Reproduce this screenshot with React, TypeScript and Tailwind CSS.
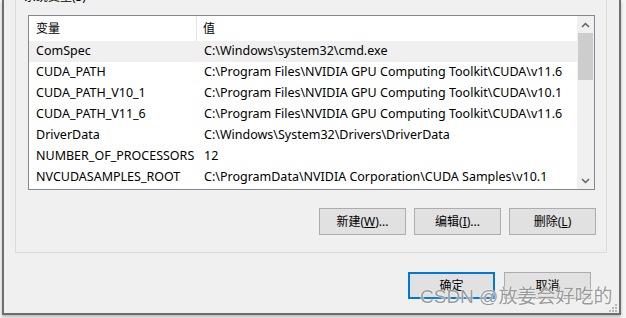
import React from 'react'

const rows: [string, string][] = [
  ['ComSpec', 'C:\\Windows\\system32\\cmd.exe'],
  ['CUDA_PATH', 'C:\\Program Files\\NVIDIA GPU Computing Toolkit\\CUDA\\v11.6'],
  ['CUDA_PATH_V10_1', 'C:\\Program Files\\NVIDIA GPU Computing Toolkit\\CUDA\\v10.1'],
  ['CUDA_PATH_V11_6', 'C:\\Program Files\\NVIDIA GPU Computing Toolkit\\CUDA\\v11.6'],
  ['DriverData', 'C:\\Windows\\System32\\Drivers\\DriverData'],
  ['NUMBER_OF_PROCESSORS', '12'],
  ['NVCUDASAMPLES_ROOT', 'C:\\ProgramData\\NVIDIA Corporation\\CUDA Samples\\v10.1'],
  ['NVTOOLSEXT_PATH', 'C:\\Program Files\\NVIDIA Corporation\\NvToolsExt\\'],
]

const font = { fontFamily: '"Noto Sans", "Noto Sans CJK SC", sans-serif' }

function Btn({ children, focused }: { children: React.ReactNode; focused?: boolean }) {
  return (
    <div
      className={`flex h-[27px] w-[87px] items-center justify-center text-[12px] text-black ${
        focused ? 'border-2 border-[#0078d7] bg-[#e1e1e1]' : 'border border-[#adadad] bg-[#e1e1e1]'
      }`}
    >
      {children}
    </div>
  )
}

export default function App() {
  return (
    <div className="relative h-[318px] w-[626px] overflow-hidden bg-[#f5f5f5]" style={font}>
      <div className="ml-[2px] flex h-[315px] w-[619px] flex-col border-x-2 border-b-2 border-[#6e6e6e] bg-[#f0f0f0] shadow-[0_2px_3px_rgba(0,0,0,0.25)]">
        {/* group box */}
        <div className="relative ml-[11px] flex h-[253px] w-[592px] flex-col border-x border-b border-[#dcdcdc]">
          <span className="absolute left-[8px] top-[-10px] text-[12px] leading-[14px] text-black">系统变量(S)</span>

          {/* list */}
          <div className="ml-[12px] mt-[15px] flex h-[175px] w-[567px] border border-[#828790] bg-white">
            <div className="flex h-full w-[548px] flex-col overflow-hidden">
              <div className="flex h-[25px] shrink-0 items-center text-[12px] text-black">
                <div className="flex h-full w-[168px] items-center border-r border-[#e5e5e5] pl-[7px]">变量</div>
                <div className="pl-[6px]">值</div>
              </div>
              {rows.map(([name, value], i) => (
                <div
                  key={name}
                  className={`flex h-[21px] shrink-0 items-center whitespace-nowrap text-[12.5px] text-black ${
                    i === 0 ? 'bg-[#f0f0f0]' : ''
                  }`}
                >
                  <div className="w-[168px] pl-[7px]">{name}</div>
                  <div className="pl-[7px]">{value}</div>
                </div>
              ))}
            </div>
            {/* scrollbar */}
            <div className="flex h-full w-[17px] flex-col bg-[#f0f0f0]">
              <div className="flex h-[17px] items-center justify-center">
                <svg width="9" height="6" viewBox="0 0 9 6">
                  <path d="M1 5 L4.5 1.5 L8 5" fill="none" stroke="#606060" strokeWidth="1.5" />
                </svg>
              </div>
              <div className="mx-[1px] h-[47px] bg-[#cdcdcd]" />
              <div className="flex-1" />
              <div className="flex h-[17px] items-center justify-center">
                <svg width="9" height="6" viewBox="0 0 9 6">
                  <path d="M1 1 L4.5 4.5 L8 1" fill="none" stroke="#606060" strokeWidth="1.5" />
                </svg>
              </div>
            </div>
          </div>

          {/* list buttons */}
          <div className="ml-[303px] mt-[18px] flex gap-[8px]">
            <Btn>新建(<span className="underline">W</span>)...</Btn>
            <Btn>编辑(<span className="underline">I</span>)...</Btn>
            <Btn>删除(<span className="underline">L</span>)</Btn>
          </div>
        </div>

        {/* dialog buttons */}
        <div className="ml-[404px] mt-[19px] flex gap-[9px]">
          <Btn focused>确定</Btn>
          <Btn>取消</Btn>
        </div>
      </div>

      {/* watermark */}
      <div
        className="absolute left-[420px] top-[285px] whitespace-nowrap text-[19px] leading-[24px] text-[rgba(120,120,120,0.75)]"
        style={{ fontFamily: '"Liberation Sans", "Noto Sans CJK SC", sans-serif', textShadow: '0 0 1px #fff, 0 0 2px #fff' }}
      >
        CSDN @放姜会好吃的
      </div>
      {/* resize grip */}
      <div className="absolute left-[609px] top-[304px] grid grid-cols-3 gap-[1px]">
        <span />
        <span />
        <span className="h-[2px] w-[2px] bg-[#b8b8b8]" />
        <span />
        <span className="h-[2px] w-[2px] bg-[#b8b8b8]" />
        <span className="h-[2px] w-[2px] bg-[#b8b8b8]" />
        <span className="h-[2px] w-[2px] bg-[#b8b8b8]" />
        <span className="h-[2px] w-[2px] bg-[#b8b8b8]" />
        <span className="h-[2px] w-[2px] bg-[#b8b8b8]" />
      </div>
    </div>
  )
}
